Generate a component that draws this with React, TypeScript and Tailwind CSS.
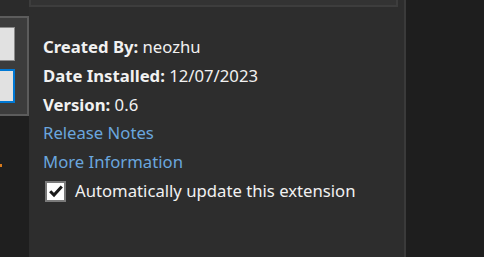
export default function App() {
  return (
    <div
      className="flex h-[257px] w-[484px] overflow-hidden bg-[#1f1f1f] text-[#f1f1f1]"
      style={{ fontFamily: '"Noto Sans", "Open Sans", sans-serif' }}
    >
      {/* left strip with cut-off form */}
      <div className="relative flex w-[29px] shrink-0 flex-col">
        <div className="h-[16px] bg-[#2b2b2b]" />
        <div className="flex h-[100px] flex-col gap-[8px] border-2 border-l-0 border-[#5c5c5c] bg-[#3c3c3c] pt-[9px]">
          <div className="h-[34px] w-[15px] border border-l-0 border-[#8a8a8a] bg-[#e1e1e1]" />
          <div className="h-[34px] w-[15px] border-2 border-l-0 border-[#0078d4] bg-[#e1e1e1]" />
        </div>
        <div className="flex-1 bg-[#1f1f1f] pt-[48px]">
          <div className="h-[3px] w-[2px] bg-[#d97a1c]" />
        </div>
      </div>

      {/* details panel */}
      <div className="flex w-[375px] shrink-0 flex-col bg-[#2d2d2d]">
        <div className="mr-[6px] h-[7px] border-2 border-t-0 border-[#3d3d3d] bg-[#333333]" />
        <div className="flex flex-col pl-[14px] pt-[26px] text-[16.7px] leading-[28.8px]">
          <div>
            <span className="font-bold">Created By:</span> neozhu
          </div>
          <div>
            <span className="font-bold">Date Installed:</span> 12/07/2023
          </div>
          <div>
            <span className="font-bold">Version:</span> 0.6
          </div>
          <a className="w-fit text-[#6aa6de]">Release Notes</a>
          <a className="w-fit text-[#6aa6de]">More Information</a>
          <label className="flex items-center gap-[9px] pl-[2px]">
            <span className="flex h-[21px] w-[21px] items-center justify-center border-2 border-[#7a7a7a] bg-white">
              <svg viewBox="0 0 16 16" className="h-[16px] w-[16px]">
                <path d="M2.2 8.2 L6 12 L13.8 3.6" fill="none" stroke="#1a1a1a" strokeWidth="3" />
              </svg>
            </span>
            Automatically update this extension
          </label>
        </div>
      </div>

      {/* separator + right area */}
      <div className="w-[2px] shrink-0 bg-[#3a3a3a]" />
      <div className="flex-1 bg-[#1e1e1e]" />
    </div>
  );
}
